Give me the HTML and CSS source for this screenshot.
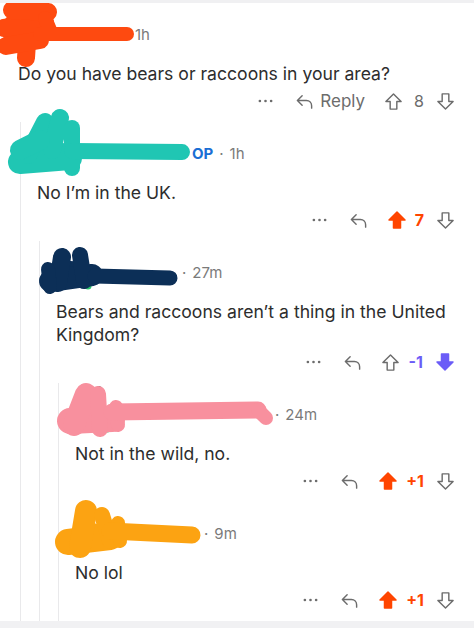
FILE: index.html
```html
<!DOCTYPE html>
<html lang="en">

<head>
    <meta charset="UTF-8">
    <meta name="viewport" content="width=device-width, initial-scale=1.0">
    <title>Comments</title>
    <link rel="stylesheet" href="styles.css">
</head>

<body>
    <svg class="defs" width="0" height="0">
        <symbol id="i-reply" viewBox="0 0 20 20"><path d="M7.5 4 L2.5 9 L7.5 14 M2.5 9 H12 C15.3 9 17.5 11.3 17.5 14.5 V17" /></symbol>
        <symbol id="i-up" viewBox="0 0 20 20"><path d="M10 2 L18 10 H13.5 V18 H6.5 V10 H2 Z" /></symbol>
        <symbol id="i-down" viewBox="0 0 20 20"><path d="M10 18 L18 10 H13.5 V2 H6.5 V10 H2 Z" /></symbol>
        <symbol id="i-dots" viewBox="0 0 16 4"><circle cx="2" cy="2" r="1.4" /><circle cx="8" cy="2" r="1.4" /><circle cx="14" cy="2" r="1.4" /></symbol>
    </svg>

    <div class="thread">
        <div class="comment">
            <div class="head">
                <span class="who w0">
                    <svg class="ink ink-red">
                        <ellipse class="solid" cx="4" cy="8" rx="20" ry="20" />
                        <path d="M12 -26 L8 36" stroke-width="18" />
                        <path d="M-14 6 L27 0" stroke-width="18" />
                        <path d="M-12 24 L22 18" stroke-width="18" />
                        <path d="M-6 -12 L30 -10" stroke-width="18" />
                        <path d="M27 -4 L32 8" stroke-width="14" />
                        <path d="M22 12 L109 12" stroke-width="14" />
                    </svg>
                </span>
                <span class="time">1h</span>
            </div>
            <p class="text">Do you have bears or raccoons in your area?</p>
            <div class="actions">
                <svg class="dots"><use href="#i-dots" /></svg>
                <span class="reply"><svg class="ic"><use href="#i-reply" /></svg>Reply</span>
                <span class="vote">
                    <svg class="ic"><use href="#i-up" /></svg>
                    <span class="count">8</span>
                    <svg class="ic"><use href="#i-down" /></svg>
                </span>
            </div>

            <div class="replies">
                <div class="comment">
                    <div class="head">
                        <span class="who w1">
                            <svg class="ink ink-teal">
                                <circle cx="14" cy="25" r="2.5" class="yellow" />
                                <ellipse class="solid" cx="8" cy="12" rx="26" ry="14" />
                                <path d="M-17 21 L33 17" stroke-width="24" />
                                <path d="M8 -19 L-9 14" stroke-width="18" />
                                <path d="M23 -23 L15 9" stroke-width="18" />
                                <path d="M35 -13 L35 27" stroke-width="16" />
                                <path d="M-17 9 L3 -1" stroke-width="20" />
                                <path d="M35 10 L145 11" stroke-width="16" />
                            </svg>
                        </span>
                        <span class="op">OP</span>
                        <span class="time"><span class="sep">·</span>1h</span>
                    </div>
                    <p class="text">No I’m in the UK.</p>
                    <div class="actions">
                        <svg class="dots"><use href="#i-dots" /></svg>
                        <span class="reply"><svg class="ic"><use href="#i-reply" /></svg></span>
                        <span class="vote">
                            <svg class="ic on-up"><use href="#i-up" /></svg>
                            <span class="count up">7</span>
                            <svg class="ic"><use href="#i-down" /></svg>
                        </span>
                    </div>

                    <div class="replies">
                        <div class="comment">
                            <div class="head">
                                <span class="who w2">
                                    <svg class="ink ink-navy">
                                        <circle cx="32" cy="26" r="3.5" class="green" />
                                        <ellipse class="solid" cx="14" cy="14" rx="22" ry="13" />
                                        <path d="M-6 21 L36 15" stroke-width="22" />
                                        <path d="M6 -3 L2 23" stroke-width="18" />
                                        <path d="M24 -5 L28 21" stroke-width="16" />
                                        <path d="M-8 9 L-6 27" stroke-width="14" />
                                        <path d="M39 16 L114 18" stroke-width="15" />
                                    </svg>
                                </span>
                                <span class="time"><span class="sep">·</span>27m</span>
                            </div>
                            <p class="text">Bears and raccoons aren’t a thing in the United Kingdom?</p>
                            <div class="actions">
                                <svg class="dots"><use href="#i-dots" /></svg>
                                <span class="reply"><svg class="ic"><use href="#i-reply" /></svg></span>
                                <span class="vote">
                                    <svg class="ic"><use href="#i-up" /></svg>
                                    <span class="count down">-1</span>
                                    <svg class="ic on-down"><use href="#i-down" /></svg>
                                </span>
                            </div>

                            <div class="replies">
                                <div class="comment">
                                    <div class="head">
                                        <span class="who w3">
                                            <svg class="ink ink-pink">
                                                <circle cx="24" cy="-12" r="3.5" class="ring" />
                                                <circle cx="32" cy="27" r="3.5" class="green" />
                                                <ellipse class="solid" cx="16" cy="14" rx="22" ry="13" />
                                                <path d="M-5 19 L37 17" stroke-width="26" />
                                                <path d="M11 -8 L-1 23" stroke-width="22" />
                                                <path d="M23 -8 L25 27" stroke-width="16" />
                                                <path d="M41 5 L43 23" stroke-width="14" />
                                                <path d="M37 10 L183 8" stroke-width="17" />
                                                <path d="M183 8 L191 16" stroke-width="14" />
                                            </svg>
                                        </span>
                                        <span class="time"><span class="sep">·</span>24m</span>
                                    </div>
                                    <p class="text">Not in the wild, no.</p>
                                    <div class="actions">
                                        <svg class="dots"><use href="#i-dots" /></svg>
                                        <span class="reply"><svg class="ic"><use href="#i-reply" /></svg></span>
                                        <span class="vote">
                                            <svg class="ic on-up"><use href="#i-up" /></svg>
                                            <span class="count up">+1</span>
                                            <svg class="ic"><use href="#i-down" /></svg>
                                        </span>
                                    </div>
                                </div>

                                <div class="comment last">
                                    <div class="head">
                                        <span class="who w4">
                                            <svg class="ink ink-amber">
                                                <path d="M17 -3 Q24 -13 31 -4" class="arc" />
                                                <ellipse class="solid" cx="15" cy="15" rx="21" ry="13" />
                                                <path d="M-7 21 L35 16" stroke-width="26" />
                                                <path d="M11 -10 L5 26" stroke-width="22" />
                                                <path d="M27 -6 L35 20" stroke-width="16" />
                                                <path d="M43 2 L45 20" stroke-width="14" />
                                                <path d="M35 10 L117 14" stroke-width="17" />
                                            </svg>
                                        </span>
                                        <span class="time"><span class="sep">·</span>9m</span>
                                    </div>
                                    <p class="text">No lol</p>
                                    <div class="actions">
                                        <svg class="dots"><use href="#i-dots" /></svg>
                                        <span class="reply"><svg class="ic"><use href="#i-reply" /></svg></span>
                                        <span class="vote">
                                            <svg class="ic on-up"><use href="#i-up" /></svg>
                                            <span class="count up">+1</span>
                                            <svg class="ic"><use href="#i-down" /></svg>
                                        </span>
                                    </div>
                                </div>
                            </div>
                        </div>
                    </div>
                </div>
            </div>
        </div>
    </div>
    <div class="bottom"></div>
</body>

</html>
```

FILE: styles.css
```css
body {
    margin: 0;
    border-top: 3px solid #f0f0f2;
    font-family: "Inter", "Noto Sans", sans-serif;
    color: #2d2d2d;
    background: #fff;
    overflow: hidden;
}

.defs {
    position: absolute;
}

.thread {
    padding: 0 19px 0 18px;
}

.comment {
    padding-top: 19px;
}

.comment + .comment {
    margin-top: 6px;
}

.comment.last {
    padding-bottom: 6px;
}

.replies {
    margin: 6px 0 0 2px;
    padding-left: 16px;
    border-left: 1px solid #e9e9eb;
}

/* header row: scribbled name + time */
.head {
    display: flex;
    align-items: center;
    height: 24px;
    margin-bottom: 16px;
    font-size: 15px;
    color: #7a7a7a;
}

.who {
    position: relative;
    flex: none;
    height: 24px;
}

.w0 { width: 117px; }
.w1 { width: 155px; }
.w2 { width: 126px; }
.w3 { width: 200px; }
.w4 { width: 129px; }

.ink {
    position: absolute;
    left: 0;
    top: 0;
    width: 100%;
    height: 24px;
    overflow: visible;
    fill: none;
    stroke: currentColor;
    stroke-linecap: round;
    stroke-linejoin: round;
}

.ink-red { color: #fe4a10; }
.ink-teal { color: #20c6b3; }
.ink-navy { color: #0c2f57; }
.ink-pink { color: #f8909e; }
.ink-amber { color: #fca312; }

.ink .solid {
    fill: currentColor;
    stroke: none;
}

.ink .green {
    fill: #2cc66c;
    stroke: none;
}

.ink .yellow {
    fill: #e8b931;
    stroke: none;
}

.ink .ring {
    stroke: #555;
    stroke-width: 1;
    fill: #fff;
}

.ink .arc {
    stroke: #24b8ad;
    stroke-width: 2.5;
}

.op {
    color: #1a6fd4;
    font-weight: 700;
    margin-right: 6px;
}

.sep {
    margin-right: 6px;
}

.text {
    margin: 0 0 1px;
    font-size: 17.6px;
    line-height: 23px;
}

/* action row */
.actions {
    display: flex;
    justify-content: flex-end;
    align-items: center;
    height: 30px;
    color: #6c6c6c;
}

.dots {
    width: 15px;
    height: 4px;
    fill: currentColor;
    margin-right: 22px;
}

.reply {
    display: flex;
    align-items: center;
    gap: 6px;
    margin-right: 19px;
    font-size: 17px;
}

.vote {
    display: flex;
    align-items: center;
}

.ic {
    width: 19px;
    height: 19px;
    fill: none;
    stroke: currentColor;
    stroke-width: 1.5;
    stroke-linecap: round;
    stroke-linejoin: round;
}

.ic.on-up {
    color: #ff4500;
    fill: #ff4500;
    width: 20px;
    height: 20px;
}

.ic.on-down {
    color: #6b5cf7;
    fill: #6b5cf7;
    width: 20px;
    height: 20px;
}

.count {
    margin: 0 12px 0 11px;
    font-size: 16px;
}

.count.up {
    color: #ff4500;
    font-weight: 700;
    margin-left: 8px;
}

.count.down {
    color: #6b5cf7;
    font-weight: 700;
    margin-left: 9px;
}

.bottom {
    height: 10px;
    background: #f1f1f3;
}
```
